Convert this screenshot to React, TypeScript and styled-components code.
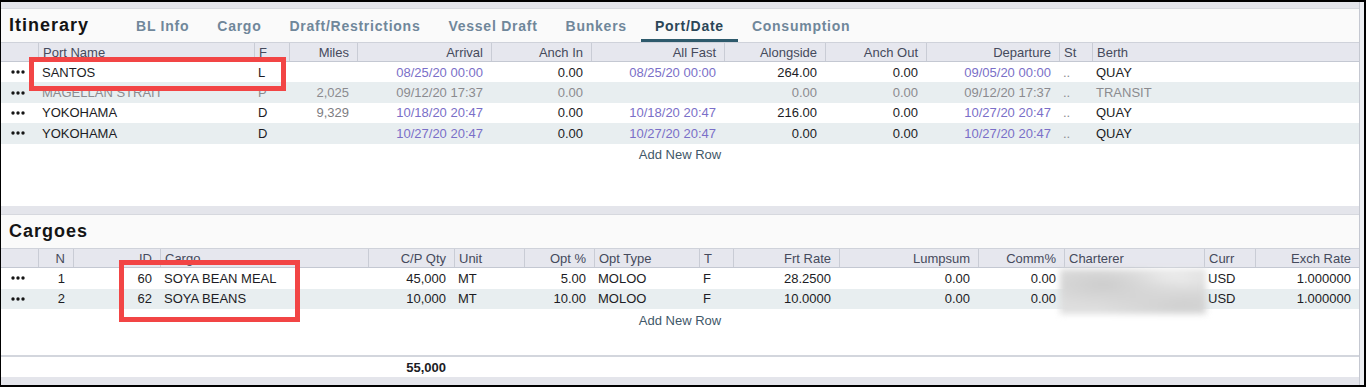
import React from "react"
import styled, { createGlobalStyle, css } from "styled-components"

const Global = createGlobalStyle`
  html, body {
    margin: 0;
    padding: 0;
    background: #fff;
  }
  body {
    font-family: "Liberation Sans", Arial, sans-serif;
    font-size: 13px;
    color: #1c1c24;
  }
`

type Align = "left" | "right" | "center"
type Tone = "normal" | "date" | "muted" | "dim"

const ITIN_COLS = "37px 216px 35px 68px 134px 100px 133px 101px 101px 133px 33px 1fr"
const CARGO_COLS = "37px 35px 87px 208px 86px 70px 70px 105px 34px 106px 139px 86px 140px 51px 1fr"

const S = {
  Frame: styled.div`
    position: relative;
    width: 1366px;
    height: 387px;
    box-sizing: border-box;
    border: 1px solid #000;
    border-top-width: 2px;
    border-bottom-width: 2px;
    border-right-width: 2px;
    background: #e4e5eb;
    display: flex;
    overflow: hidden;
  `,
  Main: styled.div`
    flex: 1;
    display: flex;
    flex-direction: column;
    gap: 8px;
    padding: 6px 0 8px;
    min-width: 0;
  `,
  ScrollStrip: styled.div`
    width: 4px;
    border-left: 1px solid #c5c8d1;
    background: #eceef2;
  `,
  Panel: styled.section<{ $fixed?: number }>`
    background: #fff;
    display: flex;
    flex-direction: column;
    border-top: 1px solid #d6d8de;
    ${(p) =>
      p.$fixed
        ? css`
            height: ${p.$fixed}px;
            flex: none;
          `
        : css`
            flex: 1;
          `}
  `,
  PanelHead: styled.div`
    height: 33px;
    flex: none;
    background: #fafafa;
    display: flex;
    align-items: stretch;
    padding-left: 8px;
  `,
  Title: styled.h2`
    margin: 0 33px 0 0;
    display: flex;
    align-items: center;
    font-size: 18px;
    font-weight: bold;
    letter-spacing: 1px;
    color: #141414;
  `,
  Tabs: styled.nav`
    display: flex;
  `,
  Tab: styled.div<{ $active?: boolean }>`
    display: flex;
    align-items: center;
    padding: 3px 14px 0;
    font-size: 14px;
    font-weight: bold;
    letter-spacing: 0.75px;
    color: ${(p) => (p.$active ? "#2b4657" : "#70879a")};
    border-bottom: 3px solid ${(p) => (p.$active ? "#2e5a6c" : "transparent")};
    cursor: pointer;
  `,
  HeadRow: styled.div<{ $cols: string }>`
    display: grid;
    grid-template-columns: ${(p) => p.$cols};
    height: 20px;
    box-sizing: border-box;
    flex: none;
    background: #e6e7ee;
    border-top: 1px solid #cfd2da;
    border-bottom: 1px solid #c4c8d2;
  `,
  HeadCell: styled.div<{ $align?: Align }>`
    display: flex;
    align-items: center;
    justify-content: ${(p) =>
      p.$align === "right" ? "flex-end" : p.$align === "center" ? "center" : "flex-start"};
    padding: 0 8px 0 4px;
    color: #454a5c;
    white-space: nowrap;
    overflow: hidden;
    & + & {
      border-left: 1px solid #c9ccd5;
    }
  `,
  Body: styled.div`
    position: relative;
    flex: none;
  `,
  Row: styled.div<{ $cols: string; $alt?: boolean; $h: number }>`
    display: grid;
    grid-template-columns: ${(p) => p.$cols};
    height: ${(p) => p.$h}px;
    background: ${(p) => (p.$alt ? "#e8eef0" : "#fff")};
  `,
  Cell: styled.div<{ $align?: Align; $tone?: Tone; $bold?: boolean }>`
    display: flex;
    align-items: center;
    justify-content: ${(p) =>
      p.$align === "right" ? "flex-end" : p.$align === "center" ? "center" : "flex-start"};
    padding: 0 8px 0 4px;
    white-space: nowrap;
    overflow: hidden;
    font-weight: ${(p) => (p.$bold ? "bold" : "normal")};
    color: ${(p) =>
      p.$tone === "date"
        ? "#7a6fc8"
        : p.$tone === "muted"
        ? "#8b8b8f"
        : p.$tone === "dim"
        ? "#7d7d82"
        : "#1c1c24"};
  `,
  AddRow: styled.div`
    height: 22px;
    flex: none;
    display: flex;
    align-items: center;
    justify-content: center;
    color: #3f5869;
    cursor: pointer;
  `,
  Spacer: styled.div`
    flex: 1;
  `,
  Footer: styled.div`
    display: grid;
    grid-template-columns: ${CARGO_COLS};
    height: 20px;
    flex: none;
    border-top: 2px solid #d3d6dd;
  `,
  Redacted: styled.div`
    position: absolute;
    left: 1059px;
    top: 1px;
    width: 146px;
    height: 45px;
    background:
      radial-gradient(ellipse at 30% 35%, #cdcdcd 0%, transparent 55%),
      radial-gradient(ellipse at 85% 80%, #d0d0d0 0%, transparent 50%),
      radial-gradient(ellipse at 70% 20%, #eeeeee 0%, transparent 45%),
      #dedede;
    filter: blur(3px);
  `,
  Mark: styled.div<{ $x: number; $y: number; $w: number; $h: number }>`
    position: absolute;
    left: ${(p) => p.$x}px;
    top: ${(p) => p.$y}px;
    width: ${(p) => p.$w}px;
    height: ${(p) => p.$h}px;
    box-sizing: border-box;
    border: 5px solid #f24545;
    pointer-events: none;
  `,
}

const Dots: React.FC = () => (
  <svg width="14" height="4" viewBox="0 0 14 4" aria-label="more">
    <circle cx="2" cy="2" r="1.7" fill="#151515" />
    <circle cx="7" cy="2" r="1.7" fill="#151515" />
    <circle cx="12" cy="2" r="1.7" fill="#151515" />
  </svg>
)

const tabs = ["BL Info", "Cargo", "Draft/Restrictions", "Vessel Draft", "Bunkers", "Port/Date", "Consumption"]

const itinHead: [string, Align][] = [
  ["", "center"],
  ["Port Name", "left"],
  ["F", "left"],
  ["Miles", "right"],
  ["Arrival", "right"],
  ["Anch In", "right"],
  ["All Fast", "right"],
  ["Alongside", "right"],
  ["Anch Out", "right"],
  ["Departure", "right"],
  ["St", "left"],
  ["Berth", "left"],
]

type Port = {
  port: string
  f: string
  miles: string
  arrival: string
  anchIn: string
  allFast: string
  alongside: string
  anchOut: string
  departure: string
  berth: string
  muted?: boolean
}

const ports: Port[] = [
  { port: "SANTOS", f: "L", miles: "", arrival: "08/25/20 00:00", anchIn: "0.00", allFast: "08/25/20 00:00", alongside: "264.00", anchOut: "0.00", departure: "09/05/20 00:00", berth: "QUAY" },
  { port: "MAGELLAN STRAIT", f: "P", miles: "2,025", arrival: "09/12/20 17:37", anchIn: "0.00", allFast: "", alongside: "0.00", anchOut: "0.00", departure: "09/12/20 17:37", berth: "TRANSIT", muted: true },
  { port: "YOKOHAMA", f: "D", miles: "9,329", arrival: "10/18/20 20:47", anchIn: "0.00", allFast: "10/18/20 20:47", alongside: "216.00", anchOut: "0.00", departure: "10/27/20 20:47", berth: "QUAY" },
  { port: "YOKOHAMA", f: "D", miles: "", arrival: "10/27/20 20:47", anchIn: "0.00", allFast: "10/27/20 20:47", alongside: "0.00", anchOut: "0.00", departure: "10/27/20 20:47", berth: "QUAY" },
]

const cargoHead: [string, Align][] = [
  ["", "center"],
  ["N", "right"],
  ["ID", "right"],
  ["Cargo", "left"],
  ["C/P Qty", "right"],
  ["Unit", "left"],
  ["Opt %", "right"],
  ["Opt Type", "left"],
  ["T", "left"],
  ["Frt Rate", "right"],
  ["Lumpsum", "right"],
  ["Comm%", "right"],
  ["Charterer", "left"],
  ["Curr", "left"],
  ["Exch Rate", "right"],
]

const cargoes = [
  { n: "1", id: "60", cargo: "SOYA BEAN MEAL", qty: "45,000", unit: "MT", opt: "5.00", optType: "MOLOO", t: "F", frt: "28.2500", lump: "0.00", comm: "0.00", curr: "USD", exch: "1.000000" },
  { n: "2", id: "62", cargo: "SOYA BEANS", qty: "10,000", unit: "MT", opt: "10.00", optType: "MOLOO", t: "F", frt: "10.0000", lump: "0.00", comm: "0.00", curr: "USD", exch: "1.000000" },
]

const App: React.FC = () => {
  return (
    <>
      <Global />
      <S.Frame>
        <S.Main>
          <S.Panel $fixed={197}>
            <S.PanelHead>
              <S.Title>Itinerary</S.Title>
              <S.Tabs>
                {tabs.map((t) => (
                  <S.Tab key={t} $active={t === "Port/Date"}>
                    {t}
                  </S.Tab>
                ))}
              </S.Tabs>
            </S.PanelHead>
            <S.HeadRow $cols={ITIN_COLS}>
              {itinHead.map(([label, align], i) => (
                <S.HeadCell key={i} $align={align}>
                  {label}
                </S.HeadCell>
              ))}
            </S.HeadRow>
            <S.Body>
              {ports.map((p, i) => {
                const tone: Tone = p.muted ? "muted" : "normal"
                const dateTone: Tone = p.muted ? "muted" : "date"
                return (
                  <S.Row key={i} $cols={ITIN_COLS} $alt={i % 2 === 1} $h={20.4}>
                    <S.Cell $align="center">
                      <Dots />
                    </S.Cell>
                    <S.Cell $tone={tone}>{p.port}</S.Cell>
                    <S.Cell $tone={tone}>{p.f}</S.Cell>
                    <S.Cell $align="right" $tone={p.muted ? "muted" : "dim"}>
                      {p.miles}
                    </S.Cell>
                    <S.Cell $align="right" $tone={dateTone}>
                      {p.arrival}
                    </S.Cell>
                    <S.Cell $align="right" $tone={tone}>
                      {p.anchIn}
                    </S.Cell>
                    <S.Cell $align="right" $tone={dateTone}>
                      {p.allFast}
                    </S.Cell>
                    <S.Cell $align="right" $tone={tone}>
                      {p.alongside}
                    </S.Cell>
                    <S.Cell $align="right" $tone={tone}>
                      {p.anchOut}
                    </S.Cell>
                    <S.Cell $align="right" $tone={dateTone}>
                      {p.departure}
                    </S.Cell>
                    <S.Cell $tone="muted">..</S.Cell>
                    <S.Cell $tone={tone}>{p.berth}</S.Cell>
                  </S.Row>
                )
              })}
            </S.Body>
            <S.AddRow>Add New Row</S.AddRow>
            <S.Spacer />
          </S.Panel>

          <S.Panel>
            <S.PanelHead>
              <S.Title>Cargoes</S.Title>
            </S.PanelHead>
            <S.HeadRow $cols={CARGO_COLS}>
              {cargoHead.map(([label, align], i) => (
                <S.HeadCell key={i} $align={align}>
                  {label}
                </S.HeadCell>
              ))}
            </S.HeadRow>
            <S.Body>
              {cargoes.map((c, i) => (
                <S.Row key={i} $cols={CARGO_COLS} $alt={i % 2 === 1} $h={20.5}>
                  <S.Cell $align="center">
                    <Dots />
                  </S.Cell>
                  <S.Cell $align="right">{c.n}</S.Cell>
                  <S.Cell $align="right">{c.id}</S.Cell>
                  <S.Cell>{c.cargo}</S.Cell>
                  <S.Cell $align="right">{c.qty}</S.Cell>
                  <S.Cell>{c.unit}</S.Cell>
                  <S.Cell $align="right">{c.opt}</S.Cell>
                  <S.Cell>{c.optType}</S.Cell>
                  <S.Cell>{c.t}</S.Cell>
                  <S.Cell $align="right">{c.frt}</S.Cell>
                  <S.Cell $align="right">{c.lump}</S.Cell>
                  <S.Cell $align="right">{c.comm}</S.Cell>
                  <S.Cell />
                  <S.Cell>{c.curr}</S.Cell>
                  <S.Cell $align="right">{c.exch}</S.Cell>
                </S.Row>
              ))}
              <S.Redacted />
            </S.Body>
            <S.AddRow>Add New Row</S.AddRow>
            <S.Spacer />
            <S.Footer>
              <S.Cell />
              <S.Cell />
              <S.Cell />
              <S.Cell />
              <S.Cell $align="right" $bold>
                55,000
              </S.Cell>
            </S.Footer>
          </S.Panel>
        </S.Main>
        <S.ScrollStrip />

        <S.Mark $x={28} $y={55} $w={257} $h={34} />
        <S.Mark $x={118} $y={258} $w={181} $h={62} />
      </S.Frame>
    </>
  )
}

export default App
